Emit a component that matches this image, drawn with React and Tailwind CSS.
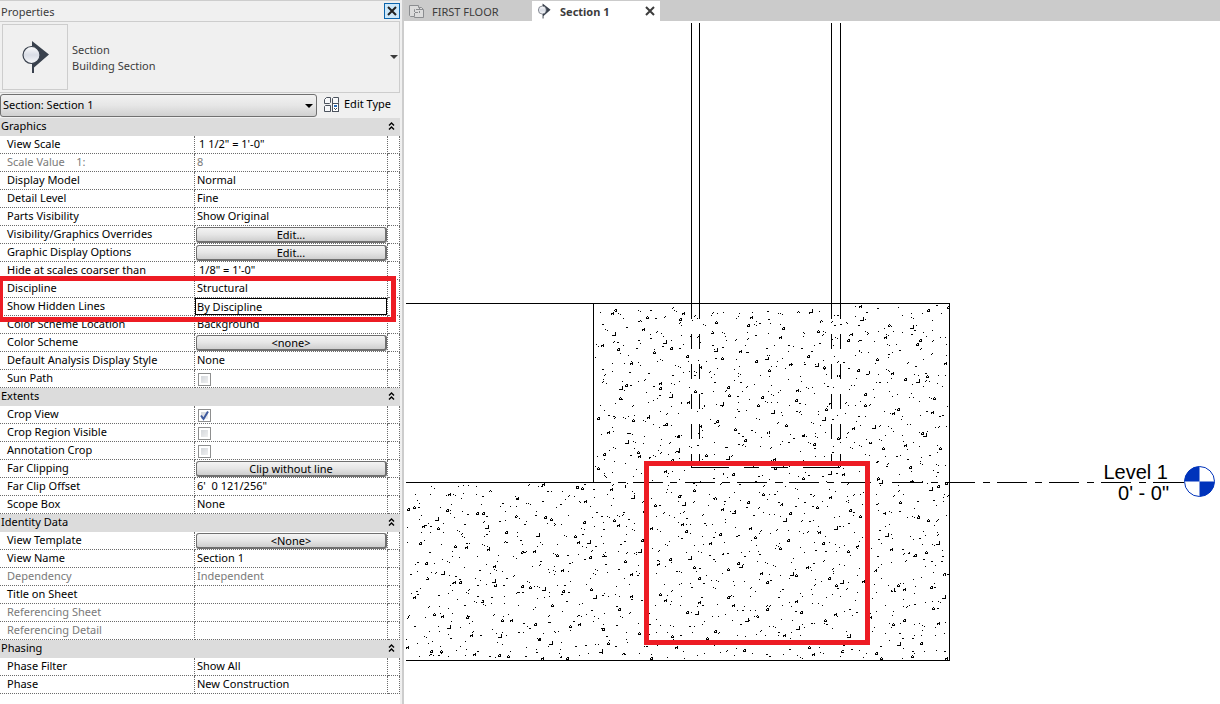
import { useState } from "react";
import clsx from "clsx";

const groups = [
  {
    title: "Graphics",
    rows: [
      { label: "View Scale", value: '1 1/2" = 1\'-0"', indent: true },
      { label: "Scale Value\u00a0\u00a0\u00a0 1:", value: "8", muted: true },
      { label: "Display Model", value: "Normal" },
      { label: "Detail Level", value: "Fine" },
      { label: "Parts Visibility", value: "Show Original" },
      { label: "Visibility/Graphics Overrides", value: "Edit...", type: "button" },
      { label: "Graphic Display Options", value: "Edit...", type: "button" },
      { label: "Hide at scales coarser than", value: '1/8" = 1\'-0"', indent: true },
      { label: "Discipline", value: "Structural", marked: true },
      { label: "Show Hidden Lines", value: "By Discipline", type: "input" },
      { label: "Color Scheme Location", value: "Background" },
      { label: "Color Scheme", value: "<none>", type: "button" },
      { label: "Default Analysis Display Style", value: "None" },
      { label: "Sun Path", value: false, type: "checkbox" },
    ],
  },
  {
    title: "Extents",
    rows: [
      { label: "Crop View", value: true, type: "checkbox" },
      { label: "Crop Region Visible", value: false, type: "checkbox" },
      { label: "Annotation Crop", value: false, type: "checkbox" },
      { label: "Far Clipping", value: "Clip without line", type: "button" },
      { label: "Far Clip Offset", value: "6'\u00a0 0 121/256\"" },
      { label: "Scope Box", value: "None" },
    ],
  },
  {
    title: "Identity Data",
    rows: [
      { label: "View Template", value: "<None>", type: "button" },
      { label: "View Name", value: "Section 1" },
      { label: "Dependency", value: "Independent", muted: true },
      { label: "Title on Sheet", value: "" },
      { label: "Referencing Sheet", value: "", muted: true },
      { label: "Referencing Detail", value: "", muted: true },
    ],
  },
  {
    title: "Phasing",
    rows: [
      { label: "Phase Filter", value: "Show All" },
      { label: "Phase", value: "New Construction" },
    ],
  },
];

// Aggregate in the concrete hatch, as "x,y" centres
const largeStones = `
811,311 862,319 614,334 665,342 912,327 716,350 767,358 817,365 868,373 918,381 621,388 671,396
722,404 773,412 824,419 874,427 925,435 627,442 678,450 728,458 830,473 437,519 487,527 538,535
589,542 633,497 640,551 443,573 494,581 544,589 595,597 449,627 500,636 551,643 601,651 684,504
690,558 697,613 734,512 785,520 836,528 741,566 792,574 842,582 747,620 798,628 849,636 931,489
887,535 938,543 893,590 944,597 899,644 881,482`;

const smallStones = `
613,313 616,310 647,317 684,313 681,319 716,322 752,317 749,325 821,321 861,306 929,310 948,307
644,329 672,348 712,332 781,337 784,328 818,331 852,334 849,340 889,325 886,337 918,344 920,340
603,345 619,349 654,352 632,363 688,356 722,358 741,351 757,361 769,370 791,364 809,356 824,367
839,375 859,370 877,359 893,373 906,379 927,376 946,363 627,385 620,398 661,383 661,388 695,391
689,402 729,387 729,395 701,367 763,397 758,405 798,390 797,400 826,409 831,403 866,394 865,405
894,413 899,409 934,398 933,412 599,418 633,420 649,417 667,424 678,436 701,426 718,421 735,429
769,432 746,440 786,425 804,435 815,444 838,438 854,428 871,442 883,448 906,445 923,433 940,448
609,432 605,454 638,452 640,456 673,460 706,455 775,459 776,468 598,468 666,471 734,474 803,478
844,474 911,467 878,478 912,481 939,486 946,483 626,486 409,509 414,507 450,494 448,510 438,528
424,526 421,543 455,546 467,547 478,513 483,513 489,549 507,532 516,516 518,498 546,517 551,519
535,551 523,552 557,555 544,484 578,487 582,488 586,501 585,522 575,536 579,542 591,557 603,555
612,489 626,486 614,520 619,525 643,540 625,561 632,574 427,563 427,578 455,582 461,582 495,585
495,566 523,586 530,587 563,570 564,591 591,589 415,597 483,601 552,605 632,596 620,609 434,614
443,616 468,617 502,620 512,620 536,624 570,626 580,624 604,629 639,633 472,635 540,639 608,643
408,647 432,651 441,651 475,654 500,655 508,656 543,658 568,658 655,505 652,528 680,496 694,490
683,524 687,531 694,567 659,564 671,559 660,594 666,600 688,612 672,636 677,647 652,658 715,498
723,509 749,502 763,494 782,504 791,513 817,507 831,497 851,510 860,516 751,528 721,534 755,537
711,543 789,540 780,548 820,532 824,543 848,551 858,546 739,563 728,569 762,573 768,582 796,575
808,567 830,578 836,585 864,581 700,578 728,597 734,605 768,609 757,616 797,601 802,612 825,620
836,614 716,631 707,638 785,635 745,650 809,647 814,654 843,651 900,502 885,513 919,517 928,520
892,549 916,555 926,552 876,570 945,574 898,585 905,589 932,587 933,608 939,623 905,620 893,624
871,617 922,643 912,656 947,658 877,653 881,658 700,602`;

const toPoints = (text) =>
  text
    .trim()
    .split(/\s+/)
    .map((pair) => pair.split(",").map(Number));

function seeded(seed) {
  let s = seed;
  return () => {
    s = (s * 16807) % 2147483647;
    return s / 2147483647;
  };
}

// Fine sand: one grain per cell, jittered, kept inside the slab outline
function makeSand() {
  const rand = seeded(4217);
  const grains = [];
  for (let y = 304; y < 660; y += 10) {
    for (let x = 406; x < 949; x += 11) {
      const gx = Math.floor(x - 3 + rand() * 17);
      const gy = Math.floor(y - 3 + rand() * 16);
      const shape = rand();
      if (gx < 406 || gx > 947 || gy < 305 || gy > 658) continue;
      if (gy < 484 && gx < 595) continue;
      if (shape < 0.66) grains.push(`M${gx} ${gy}h1v1h-1z`);
      else if (shape < 0.86) grains.push(`M${gx} ${gy}h2v1h-2z`);
      else if (shape < 0.94) grains.push(`M${gx} ${gy}h1v1h-1zm1 -1h1v1h-1z`);
      else grains.push(`M${gx} ${gy}h1v1h-1zm2 1h1v1h-1z`);
    }
  }
  return grains.join("");
}

const sandPath = makeSand();
const largePath = toPoints(largeStones)
  .map(([x, y]) => `M${x + 1} ${y - 2}h1v4h-4v-1h1v-1h1v-1h1zm0 1v2h-2v-1h1v-1z`)
  .join("");
const smallPath = toPoints(smallStones)
  .map(([x, y], i) =>
    i % 3 === 0
      ? `M${x} ${y - 1}h1v3h-1v-1h-1v1h-1v-2h2z`
      : i % 3 === 1
        ? `M${x - 1} ${y - 1}h2v3h-3v-2h1zm0 1v1h1v-1z`
        : `M${x} ${y - 1}h1v1h1v2h-3v-2h1zm0 1v1h1v-1z`,
  )
  .join("");

function SectionMark({ className, id }) {
  return (
    <svg viewBox="0 0 28 34" className={className} aria-hidden="true">
      <defs>
        <linearGradient id={id} x1="0" y1="0" x2="0" y2="1">
          <stop offset="0" stopColor="#fdfdfe" />
          <stop offset="0.5" stopColor="#d9dde6" />
          <stop offset="1" stopColor="#f8f9fb" />
        </linearGradient>
      </defs>
      <path d="M11 1L28 14.500L13 27.500V33H11Z" fill="#39414d" />
      <circle cx="10.500" cy="15" r="8.500" fill={`url(#${id})`} stroke="#39414d" strokeWidth="1.200" />
    </svg>
  );
}

function CloseIcon({ className }) {
  return (
    <svg viewBox="0 0 10 10" className={className} aria-hidden="true">
      <path d="M1 1L9 9M9 1L1 9" stroke="currentColor" strokeWidth="2" />
    </svg>
  );
}

function ArrowDown({ className }) {
  return (
    <svg viewBox="0 0 8 4" className={className} aria-hidden="true">
      <path d="M0 0H8L4 4Z" fill="currentColor" />
    </svg>
  );
}

function CollapseIcon() {
  return (
    <svg viewBox="0 0 7 8" className="h-2 w-[7px]" aria-hidden="true">
      <path d="M1 3.500L3.500 1L6 3.500M1 7.500L3.500 5L6 7.500" fill="none" stroke="#000" strokeWidth="1.400" />
    </svg>
  );
}

function EditTypeIcon() {
  return (
    <svg viewBox="0 0 17 17" className="size-[17px]" aria-hidden="true">
      <g fill="#f7f8fa" stroke="#4b525d">
        <path d="M3.500 1.500H7.500V6.500L6.500 7.500H1.500V3.500Z" />
        <path d="M10.500 1.500H15.500V6.500L14.500 7.500H9.500V2.500Z" />
        <path d="M2.500 9.500H7.500V15.500H1.500V10.500Z" />
        <rect x="9.500" y="7.500" width="6" height="8" fill="#fff" />
      </g>
      <path d="M11 9H14V11H11Z" fill="#2b6cb8" />
      <path d="M11 12h1v1h-1zM13 12h1v1h-1zM12 13h1v1h-1z" fill="#4b525d" />
    </svg>
  );
}

function PlanIcon() {
  return (
    <svg viewBox="0 0 17 15" className="h-[15px] w-[17px]" aria-hidden="true">
      <g fill="#dcdcdc" stroke="#8b8d90">
        <path d="M1.500 1.500H10.500V3.500H13.500L15.500 5.500V13.500H6.500V12.500H2.500L1.500 11.500Z" />
        <path d="M6.500 12V5.500H15M11.500 3V9M7 8.500H11" fill="none" strokeDasharray="3 1" />
      </g>
    </svg>
  );
}

function PropertyValue({ row, id }) {
  const [value, setValue] = useState(row.value);

  if (row.type === "button") {
    return (
      <button
        id={id}
        type="button"
        className="mt-px ml-px block h-4 w-[191px] rounded-[3px] border border-r-2 border-b-2 border-[#707070] bg-linear-to-b from-[#f4f4f4] via-[#e6e6e6] to-[#cfcfcf] text-center leading-[13px]"
      >
        {value}
      </button>
    );
  }

  if (row.type === "checkbox") {
    return (
      <span className="relative mt-[3px] ml-[3px] block size-[13px]">
        <input
          id={id}
          type="checkbox"
          checked={value}
          onChange={(event) => setValue(event.target.checked)}
          className="block size-[13px] appearance-none border border-[#8e8f8f] bg-linear-to-br from-[#cdd1d6] to-[#f6f6f6] ring-2 ring-white ring-inset"
        />
        {value && (
          <svg viewBox="0 0 13 13" className="pointer-events-none absolute inset-0" aria-hidden="true">
            <path d="M3 6.500L5.500 10L10 2.500" fill="none" stroke="#3f5a9e" strokeWidth="2" />
          </svg>
        )}
      </span>
    );
  }

  if (row.type === "input") {
    return (
      <input
        id={id}
        type="text"
        value={value}
        onChange={(event) => setValue(event.target.value)}
        className="block h-[17px] w-48 border border-black bg-white pb-px pl-px leading-[14px] outline-none"
      />
    );
  }

  return <span className={row.indent ? "pl-1" : "pl-0.5"}>{value}</span>;
}

function PropertyGroup({ group }) {
  return (
    <tbody className="align-top">
      <tr className="h-[18px] bg-[#dcdcdc]">
        <th colSpan={2} scope="colgroup" className="pl-px text-left leading-4 font-normal">
          {group.title}
        </th>
        <td>
          <button type="button" aria-label={`Collapse ${group.title}`} className="mt-1 block">
            <CollapseIcon />
          </button>
        </td>
      </tr>
      {group.rows.map((row) => {
        const id = row.label.toLowerCase().replace(/[^a-z]+/g, "-");
        const hasControl = Boolean(row.type);
        return (
          <tr key={row.label} className={clsx("h-[18px]", row.muted && "text-[#7a7a7a]")}>
            <th
              scope="row"
              className="relative border-r border-b border-dotted border-[#6b6b6b] pl-[7px] text-left font-normal"
            >
              {hasControl ? <label htmlFor={id}>{row.label}</label> : row.label}
              {row.marked && (
                <span className="pointer-events-none absolute -top-1 -left-0.5 z-10 h-[46px] w-[398px] border-5 border-[#ed1c24]" />
              )}
            </th>
            <td className="border-r border-b border-dotted border-[#6b6b6b]">
              <PropertyValue row={row} id={id} />
            </td>
            <td className="border-r border-b border-dotted border-[#6b6b6b]" />
          </tr>
        );
      })}
    </tbody>
  );
}

function PropertiesPanel() {
  return (
    <aside className="flex w-[404px] shrink-0 flex-col overflow-hidden border-r-2 border-[#cdcdcd] bg-[#f0f0f0] pr-0.5">
      <header className="flex h-[22px] items-center justify-between border-y border-[#cdcdcd] pl-px text-[#3c3c3c]">
        <h1 className="pt-0.5">Properties</h1>
        <button
          type="button"
          aria-label="Close properties"
          className="flex size-4 items-center justify-center border border-[#0a64ad] bg-[#cde8fa] text-[#222]"
        >
          <CloseIcon className="size-2.5" />
        </button>
      </header>

      <div className="flex h-[71px] items-center border-r border-b border-[#cdcdcd] pl-0.5 text-[#3c3c3c]">
        <div className="flex size-[66px] shrink-0 items-center justify-center border border-[#cdcdcd]">
          <SectionMark id="type-mark" className="h-[34px] w-7" />
        </div>
        <div className="flex-1 pt-0.5 pl-1 leading-4">
          <p>Section</p>
          <p>Building Section</p>
        </div>
        <button type="button" aria-label="Change type" className="pr-px">
          <ArrowDown className="h-1 w-2" />
        </button>
      </div>

      <div className="flex h-[25px] items-center">
        <div className="relative w-[317px]">
          <select
            aria-label="Selection filter"
            className="block h-[23px] w-full appearance-none rounded-[3px] border border-[#707070] bg-linear-to-b from-[#f2f2f2] via-[#e6e6e6] to-[#d0d0d0] pl-0.5"
          >
            <option>Section: Section 1</option>
          </select>
          <ArrowDown className="pointer-events-none absolute top-[10px] right-1 h-1 w-2" />
        </div>
        <button type="button" className="flex items-center gap-1 pb-0.5 pl-1.5">
          <EditTypeIcon />
          Edit Type
        </button>
      </div>

      <div className="flex-1 bg-white">
        <table className="w-full table-fixed border-separate border-spacing-0 leading-[15px]">
          <colgroup>
            <col className="w-[195px]" />
            <col className="w-[193px]" />
            <col className="w-3" />
          </colgroup>
          {groups.map((group) => (
            <PropertyGroup key={group.title} group={group} />
          ))}
        </table>
      </div>
    </aside>
  );
}

function ViewTabs() {
  return (
    <nav className="flex h-[21px] bg-[#cbcbcb] pt-px text-[#3c3c3c]">
      <button type="button" className="flex w-32 items-center gap-1.5 pl-1">
        <PlanIcon />
        <span className="pt-0.5 pl-px">FIRST FLOOR</span>
      </button>
      <div className="flex w-32 items-center justify-between bg-white pr-[5px] pl-1">
        <button type="button" className="flex items-center gap-2 font-bold">
          <SectionMark id="tab-mark" className="size-4" />
          <span className="pt-0.5">Section 1</span>
        </button>
        <button type="button" aria-label="Close Section 1">
          <CloseIcon className="size-2.5" />
        </button>
      </div>
    </nav>
  );
}

function SectionDrawing() {
  return (
    <svg viewBox="404 21 816 683" width="816" height="683" className="block" role="img" aria-label="Building section">
      <path d={sandPath + largePath + smallPath} fill="#000" fillRule="evenodd" shapeRendering="crispEdges" />

      <g stroke="#000" fill="none" shapeRendering="crispEdges">
        <path d="M406 303.500H949.500V660.500H406M593.500 303V482M406 482.500H594" />
        {/* dowels: solid above the slab, hidden lines inside it */}
        <path d="M691.500 23V319M699.500 23V319M831.500 23V319M840.500 23V319" />
        <path
          d="M691.500 334V467M699.500 334V462M831.500 334V462M840.500 334V467"
          strokeDasharray="15 15"
        />
        <path d="M691 467.500H729M744 467.500H759M771 467.500H788M803 467.500H840" />
        {/* level line */}
        <path d="M594 482.500H611M618 482.500H626M633 482.500H663M670 482.500H677M685 482.500H715M722 482.500H730M737 482.500H767M775 482.500H782M789 482.500H819M827 482.500H834M841 482.500H871M893 482.500H923M931 482.500H938M945 482.500H975M983 482.500H990M997 482.500H1027M1035 482.500H1042M1049 482.500H1079M1087 482.500H1094M1101 482.500H1131M1139 482.500H1146M1153 482.500H1184" />
      </g>

      <g fontFamily="'Liberation Sans', Arial, sans-serif" fontSize="20" textAnchor="end" fill="#000">
        <text x="1168" y="479">Level 1</text>
        <text x="1169" y="500">0' - 0"</text>
      </g>

      <circle cx="1199.500" cy="481.500" r="15" fill="#fff" stroke="#0033bb" />
      <path d="M1199.500 481.500V466.500A15 15 0 0 0 1184.500 481.500ZM1199.500 481.500V496.500A15 15 0 0 0 1214.500 481.500Z" fill="#0033bb" />

      <rect x="646.500" y="463.500" width="221" height="179" fill="none" stroke="#ed1c24" strokeWidth="5" />
    </svg>
  );
}

function App() {
  return (
    <div className="flex min-h-screen bg-white font-['Noto_Sans','Open_Sans',sans-serif] text-[11px] text-black">
      <PropertiesPanel />
      <main className="min-w-0 flex-1 overflow-hidden">
        <ViewTabs />
        <SectionDrawing />
      </main>
    </div>
  );
}

export default App;
